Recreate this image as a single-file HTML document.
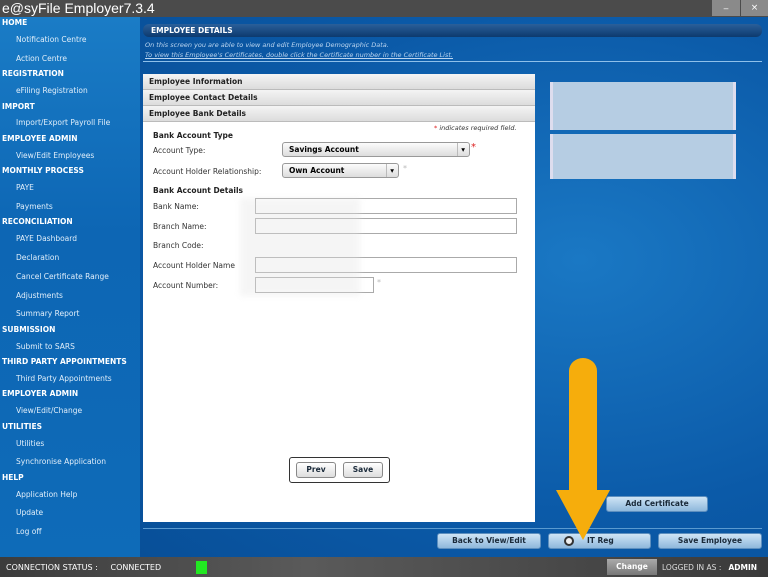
<!DOCTYPE html>
<html><head><style>
*{margin:0;padding:0;box-sizing:border-box}
body{width:768px;height:577px;overflow:hidden;font-family:"DejaVu Sans","Liberation Sans",sans-serif;font-size:8px;position:relative;background:#0b5eae}
.a{position:absolute;white-space:nowrap}
#title{left:0;top:0;width:768px;height:17px;background:#4b4b4b;color:#fff;font-family:"Liberation Sans",sans-serif;font-size:14px;line-height:17px;padding-left:2px}
#side{left:0;top:17px;width:140px;height:540px;background:linear-gradient(180deg,#1a7cc6,#0d66b4 40%,#0e6bb8)}
.h{color:#fff;font-weight:bold;font-size:7.5px;left:2px}
.i{color:#e0eefa;font-size:7.5px;left:16px}
#main{left:140px;top:17px;width:628px;height:540px;background:radial-gradient(ellipse at 70% 45%,#1a78c4,#0b5aa8 60%,#084f98)}
.bar{left:143px;top:24px;width:619px;height:13px;background:linear-gradient(#2a5f9a,#0d3a6e);border-radius:6px;color:#fff;font-weight:bold;font-size:7.5px;line-height:13px;padding-left:8px}
.t{color:#bcd6f0;font-style:italic;font-size:6.5px}
.sec{left:143px;width:392px;height:16px;background:linear-gradient(#f4f4f4,#dcdcdc);border-bottom:1px solid #bbb;font-weight:bold;font-size:7.5px;line-height:16px;padding-left:6px;color:#222}
.l{font-size:7.5px;color:#333;left:153px}
.in{background:#fff;border:1px solid #aaa;height:16px}
.sel{background:linear-gradient(#fbfbfb,#ddd);border:1px solid #999;border-radius:3px;height:15px;font-weight:bold;font-size:7.5px;line-height:13px;padding-left:6px}
.btn{background:linear-gradient(#cfe4f5,#8fb8dc);border-radius:3px;border:1px solid #5d8fbf;font-weight:bold;font-size:7.5px;color:#1a2a3a;text-align:center;line-height:14px;height:16px}
.blur{filter:blur(3px);opacity:.35}
</style></head><body>
<div class="a" id="title">e@syFile Employer7.3.4</div>
<div class="a" style="left:712px;top:0;width:28px;height:16px;background:#8a8a8a;color:#fff;text-align:center;font-size:9px">_</div>
<div class="a" style="left:741px;top:0;width:27px;height:16px;background:#8a8a8a;color:#fff;text-align:center;font-size:9px;line-height:16px">×</div>
<div class="a" id="side"></div>
<div class="a" id="main"></div>
<div class="a h" style="top:18px">HOME</div>
<div class="a i" style="top:35px">Notification Centre</div>
<div class="a i" style="top:54px">Action Centre</div>
<div class="a h" style="top:69px">REGISTRATION</div>
<div class="a i" style="top:86px">eFiling Registration</div>
<div class="a h" style="top:102px">IMPORT</div>
<div class="a i" style="top:118px">Import/Export Payroll File</div>
<div class="a h" style="top:134px">EMPLOYEE ADMIN</div>
<div class="a i" style="top:151px">View/Edit Employees</div>
<div class="a h" style="top:166px">MONTHLY PROCESS</div>
<div class="a i" style="top:183px">PAYE</div>
<div class="a i" style="top:202px">Payments</div>
<div class="a h" style="top:217px">RECONCILIATION</div>
<div class="a i" style="top:234px">PAYE Dashboard</div>
<div class="a i" style="top:253px">Declaration</div>
<div class="a i" style="top:272px">Cancel Certificate Range</div>
<div class="a i" style="top:291px">Adjustments</div>
<div class="a i" style="top:309px">Summary Report</div>
<div class="a h" style="top:325px">SUBMISSION</div>
<div class="a i" style="top:342px">Submit to SARS</div>
<div class="a h" style="top:357px">THIRD PARTY APPOINTMENTS</div>
<div class="a i" style="top:374px">Third Party Appointments</div>
<div class="a h" style="top:389px">EMPLOYER ADMIN</div>
<div class="a i" style="top:406px">View/Edit/Change</div>
<div class="a h" style="top:422px">UTILITIES</div>
<div class="a i" style="top:439px">Utilities</div>
<div class="a i" style="top:457px">Synchronise Application</div>
<div class="a h" style="top:473px">HELP</div>
<div class="a i" style="top:490px">Application Help</div>
<div class="a i" style="top:508px">Update</div>
<div class="a i" style="top:527px">Log off</div>

<div class="a bar">EMPLOYEE DETAILS</div>
<div class="a t" style="left:145px;top:41px">On this screen you are able to view and edit Employee Demographic Data.</div>
<div class="a t" style="left:145px;top:51px;text-decoration:underline">To view this Employee's Certificates, double click the Certificate number in the Certificate List.</div>
<div class="a" style="left:143px;top:61px;width:619px;height:1px;background:#8ec0ea"></div>

<div class="a" style="left:143px;top:74px;width:392px;height:448px;background:#fff"></div>
<div class="a sec" style="top:74px">Employee Information</div>
<div class="a sec" style="top:90px">Employee Contact Details</div>
<div class="a sec" style="top:106px">Employee Bank Details</div>
<div class="a" style="left:434px;top:124px;font-style:italic;font-size:6.5px;color:#333"><span style="color:#d22">*</span> indicates required field.</div>
<div class="a l" style="top:131px;font-weight:bold;color:#222">Bank Account Type</div>
<div class="a l" style="top:146px">Account Type:</div>
<div class="a sel" style="left:282px;top:142px;width:188px">Savings Account<span style="position:absolute;right:4px;border-left:1px solid #bbb;padding-left:3px">▾</span></div>
<div class="a" style="left:471px;top:142px;color:#d22;font-size:10px">*</div>
<div class="a l" style="top:167px">Account Holder Relationship:</div>
<div class="a sel" style="left:282px;top:163px;width:117px">Own Account<span style="position:absolute;right:4px;border-left:1px solid #bbb;padding-left:3px">▾</span></div>
<div class="a" style="left:403px;top:164px;color:#bbb">*</div>
<div class="a l" style="top:186px;font-weight:bold;color:#222">Bank Account Details</div>
<div class="a l" style="top:202px">Bank Name:</div>
<div class="a in" style="left:255px;top:198px;width:262px"></div>
<div class="a l" style="top:222px">Branch Name:</div>
<div class="a in" style="left:255px;top:218px;width:262px"></div>
<div class="a l" style="top:241px">Branch Code:</div>
<div class="a l" style="top:261px">Account Holder Name</div>
<div class="a in" style="left:255px;top:257px;width:262px"></div>
<div class="a l" style="top:281px">Account Number:</div>
<div class="a in" style="left:255px;top:277px;width:119px"></div>
<div class="a" style="left:377px;top:278px;color:#bbb">*</div>
<div class="a blur" style="left:240px;top:198px;width:120px;height:98px;background:#e4e4e4"></div>

<div class="a" style="left:289px;top:457px;width:101px;height:26px;border:1px solid #333;border-radius:3px;background:#fff"></div>
<div class="a btn" style="left:296px;top:462px;width:40px;background:linear-gradient(#fff,#ddd);border-color:#888">Prev</div>
<div class="a btn" style="left:343px;top:462px;width:40px;background:linear-gradient(#fff,#ddd);border-color:#888">Save</div>

<div class="a" style="left:550px;top:82px;width:186px;height:48px;background:#b6cde3;border-left:3px solid #dde;border-right:3px solid #dde"></div>
<div class="a" style="left:550px;top:134px;width:186px;height:45px;background:#b6cde3;border-left:3px solid #dde;border-right:3px solid #dde"></div>

<div class="a btn" style="left:606px;top:496px;width:102px">Add Certificate</div>
<div class="a" style="left:143px;top:528px;width:619px;height:1px;background:#5a9ad0"></div>
<div class="a btn" style="left:437px;top:533px;width:104px">Back to View/Edit</div>
<div class="a btn" style="left:548px;top:533px;width:103px;text-align:left;padding-left:38px">IT Reg</div>
<div class="a btn" style="left:658px;top:533px;width:104px">Save Employee</div>
<div class="a" style="left:564px;top:536px;width:10px;height:10px;border:2px solid #333;border-radius:50%;background:#eee"></div>

<svg class="a" style="left:554px;top:358px" width="58" height="190" viewBox="0 0 58 190">
<path d="M15 13 a14 13 0 0 1 28 0 V132 H56 L29 182 L2 132 H15 Z" fill="#f6ad0c"/>
</svg>

<div class="a" style="left:0;top:557px;width:768px;height:20px;background:linear-gradient(90deg,#3c3c3c,#5a5a5a 40%,#3a3a3a)"></div>
<div class="a" style="left:6px;top:563px;color:#fff;font-size:8px">CONNECTION STATUS :&nbsp;&nbsp;&nbsp;&nbsp; CONNECTED</div>
<div class="a" style="left:196px;top:561px;width:11px;height:13px;background:#22e822"></div>
<div class="a" style="left:607px;top:559px;width:50px;height:16px;background:linear-gradient(#aaa,#777);color:#fff;font-weight:bold;font-size:7.5px;text-align:center;line-height:16px">Change</div>
<div class="a" style="left:662px;top:563px;color:#ddd;font-size:7.5px">LOGGED IN AS :&nbsp;&nbsp; <b style="color:#fff">ADMIN</b></div>
</body></html>
